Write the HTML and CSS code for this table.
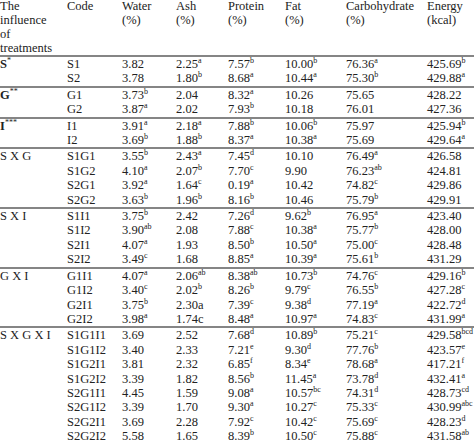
FILE: index.html
```html
<!DOCTYPE html>
<html>
<head>
<meta charset="utf-8">
<link rel="stylesheet" href="styles.css">
</head>
<body>
<table class="tbl">
<colgroup>
<col class="c1"><col class="c2"><col class="c3"><col class="c4"><col class="c5"><col class="c6"><col class="c7"><col class="c8">
</colgroup>
<thead>
<tr class="head">
<th>The<br>influence<br>of<br>treatments</th>
<th>Code</th>
<th>Water<br>(%)</th>
<th>Ash<br>(%)</th>
<th>Protein<br>(%)</th>
<th>Fat<br>(%)</th>
<th>Carbohydrate<br>(%)</th>
<th>Energy<br>(kcal)</th>
</tr>
</thead>
<tbody>
<tr class="sec"><td><b>S</b><sup>*</sup></td><td>S1</td><td>3.82</td><td>2.25<sup>a</sup></td><td>7.57<sup>b</sup></td><td>10.00<sup>b</sup></td><td>76.36<sup>a</sup></td><td>425.69<sup>b</sup></td></tr>
<tr><td></td><td>S2</td><td>3.78</td><td>1.80<sup>b</sup></td><td>8.68<sup>a</sup></td><td>10.44<sup>a</sup></td><td>75.30<sup>b</sup></td><td>429.88<sup>a</sup></td></tr>

<tr class="sec"><td><b>G</b><sup>**</sup></td><td>G1</td><td>3.73<sup>b</sup></td><td>2.04</td><td>8.32<sup>a</sup></td><td>10.26</td><td>75.65</td><td>428.22</td></tr>
<tr><td></td><td>G2</td><td>3.87<sup>a</sup></td><td>2.02</td><td>7.93<sup>b</sup></td><td>10.18</td><td>76.01</td><td>427.36</td></tr>

<tr class="sec"><td><b>I</b><sup>***</sup></td><td>I1</td><td>3.91<sup>a</sup></td><td>2.18<sup>a</sup></td><td>7.88<sup>b</sup></td><td>10.06<sup>b</sup></td><td>75.97</td><td>425.94<sup>b</sup></td></tr>
<tr><td></td><td>I2</td><td>3.69<sup>b</sup></td><td>1.88<sup>b</sup></td><td>8.37<sup>a</sup></td><td>10.38<sup>a</sup></td><td>75.69</td><td>429.64<sup>a</sup></td></tr>

<tr class="sec"><td>S X G</td><td>S1G1</td><td>3.55<sup>b</sup></td><td>2.43<sup>a</sup></td><td>7.45<sup>d</sup></td><td>10.10</td><td>76.49<sup>a</sup></td><td>426.58</td></tr>
<tr><td></td><td>S1G2</td><td>4.10<sup>a</sup></td><td>2.07<sup>b</sup></td><td>7.70<sup>c</sup></td><td>9.90</td><td>76.23<sup>ab</sup></td><td>424.81</td></tr>
<tr><td></td><td>S2G1</td><td>3.92<sup>a</sup></td><td>1.64<sup>c</sup></td><td>0.19<sup>a</sup></td><td>10.42</td><td>74.82<sup>c</sup></td><td>429.86</td></tr>
<tr><td></td><td>S2G2</td><td>3.63<sup>b</sup></td><td>1.96<sup>b</sup></td><td>8.16<sup>b</sup></td><td>10.46</td><td>75.79<sup>b</sup></td><td>429.91</td></tr>

<tr class="sec"><td>S X I</td><td>S1I1</td><td>3.75<sup>b</sup></td><td>2.42</td><td>7.26<sup>d</sup></td><td>9.62<sup>b</sup></td><td>76.95<sup>a</sup></td><td>423.40</td></tr>
<tr><td></td><td>S1I2</td><td>3.90<sup>ab</sup></td><td>2.08</td><td>7.88<sup>c</sup></td><td>10.38<sup>a</sup></td><td>75.77<sup>b</sup></td><td>428.00</td></tr>
<tr><td></td><td>S2I1</td><td>4.07<sup>a</sup></td><td>1.93</td><td>8.50<sup>b</sup></td><td>10.50<sup>a</sup></td><td>75.00<sup>c</sup></td><td>428.48</td></tr>
<tr><td></td><td>S2I2</td><td>3.49<sup>c</sup></td><td>1.68</td><td>8.85<sup>a</sup></td><td>10.39<sup>a</sup></td><td>75.61<sup>b</sup></td><td>431.29</td></tr>

<tr class="sec"><td>G X I</td><td>G1I1</td><td>4.07<sup>a</sup></td><td>2.06<sup>ab</sup></td><td>8.38<sup>ab</sup></td><td>10.73<sup>b</sup></td><td>74.76<sup>c</sup></td><td>429.16<sup>b</sup></td></tr>
<tr><td></td><td>G1I2</td><td>3.40<sup>c</sup></td><td>2.02<sup>b</sup></td><td>8.26<sup>b</sup></td><td>9.79<sup>c</sup></td><td>76.55<sup>b</sup></td><td>427.28<sup>c</sup></td></tr>
<tr><td></td><td>G2I1</td><td>3.75<sup>b</sup></td><td>2.30a</td><td>7.39<sup>c</sup></td><td>9.38<sup>d</sup></td><td>77.19<sup>a</sup></td><td>422.72<sup>d</sup></td></tr>
<tr><td></td><td>G2I2</td><td>3.98<sup>a</sup></td><td>1.74c</td><td>8.48<sup>a</sup></td><td>10.97<sup>a</sup></td><td>74.83<sup>c</sup></td><td>431.99<sup>a</sup></td></tr>

<tr class="sec"><td>S X G X I</td><td>S1G1I1</td><td>3.69</td><td>2.52</td><td>7.68<sup>d</sup></td><td>10.89<sup>b</sup></td><td>75.21<sup>c</sup></td><td>429.58<sup>bcd</sup></td></tr>
<tr><td></td><td>S1G1I2</td><td>3.40</td><td>2.33</td><td>7.21<sup>e</sup></td><td>9.30<sup>d</sup></td><td>77.76<sup>b</sup></td><td>423.57<sup>e</sup></td></tr>
<tr><td></td><td>S1G2I1</td><td>3.81</td><td>2.32</td><td>6.85<sup>f</sup></td><td>8.34<sup>e</sup></td><td>78.68<sup>a</sup></td><td>417.21<sup>f</sup></td></tr>
<tr><td></td><td>S1G2I2</td><td>3.39</td><td>1.82</td><td>8.56<sup>b</sup></td><td>11.45<sup>a</sup></td><td>73.78<sup>d</sup></td><td>432.41<sup>a</sup></td></tr>
<tr><td></td><td>S2G1I1</td><td>4.45</td><td>1.59</td><td>9.08<sup>a</sup></td><td>10.57<sup>bc</sup></td><td>74.31<sup>d</sup></td><td>428.73<sup>cd</sup></td></tr>
<tr><td></td><td>S2G1I2</td><td>3.39</td><td>1.70</td><td>9.30<sup>a</sup></td><td>10.27<sup>c</sup></td><td>75.33<sup>c</sup></td><td>430.99<sup>abc</sup></td></tr>
<tr><td></td><td>S2G2I1</td><td>3.69</td><td>2.28</td><td>7.92<sup>c</sup></td><td>10.42<sup>c</sup></td><td>75.69<sup>c</sup></td><td>428.23<sup>d</sup></td></tr>
<tr><td></td><td>S2G2I2</td><td>5.58</td><td>1.65</td><td>8.39<sup>b</sup></td><td>10.50<sup>c</sup></td><td>75.88<sup>c</sup></td><td>431.58<sup>ab</sup></td></tr>
</tbody>
</table>
</body>
</html>
```

FILE: styles.css
```css
html, body {
  margin: 0;
  padding: 0;
  background: #ffffff;
}

body {
  font-family: "Liberation Serif", "Times New Roman", serif;
  font-size: 12.5px;
  color: #222222;
  overflow: hidden;
}

.tbl {
  border-collapse: separate;
  border-spacing: 0;
  table-layout: fixed;
  width: 474px;
  margin-top: -1px;
}

.c1 { width: 67px; }
.c2 { width: 55px; }
.c3 { width: 54px; }
.c4 { width: 52px; }
.c5 { width: 57px; }
.c6 { width: 61px; }
.c7 { width: 81px; }
.c8 { width: 47px; }

.tbl th,
.tbl td {
  padding: 0;
  text-align: left;
  vertical-align: top;
  white-space: nowrap;
  font-weight: normal;
  line-height: 14.4px;
}

.head th {
  line-height: 14px;
}

.sec td {
  border-top: 2px solid #858585;
}

.tbl b {
  font-weight: bold;
}

.tbl sup {
  font-size: 8px;
  line-height: 0;
  vertical-align: 5px;
}
```
